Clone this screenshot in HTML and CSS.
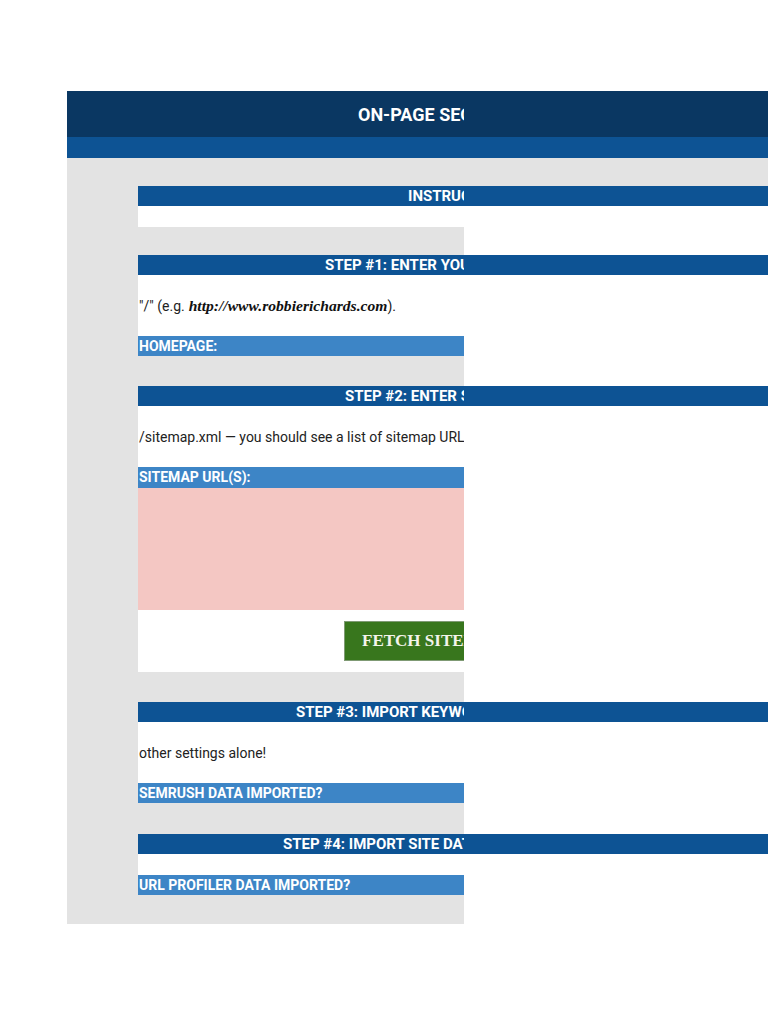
FILE: index.html
```html
<!DOCTYPE html>
<html lang="en">
<head>
<meta charset="utf-8">
<title>On-Page SEO Audit Tool</title>
<link rel="stylesheet" href="styles.css">
</head>
<body>
<main class="sheet">
  <div class="row title">
    <div class="frozen"><span class="title-text">ON-PAGE SEO AUDIT TOOL</span></div>
    <div class="ext"></div>
  </div>
  <div class="strip"></div>

  <div class="row h28"><div class="mg"></div><div class="cell"></div><div class="ext grey"></div></div>
  <div class="row bar"><div class="mg"></div><div class="cell hd p-instr">INSTRUCTIONS</div><div class="ext hd"></div></div>
  <div class="row h21"><div class="mg"></div><div class="cell white"></div><div class="ext"></div></div>
  <div class="row h28"><div class="mg"></div><div class="cell"></div><div class="ext"></div></div>

  <div class="row bar"><div class="mg"></div><div class="cell hd p-s1">STEP #1: ENTER YOUR HOMEPAGE URL</div><div class="ext hd"></div></div>
  <div class="row h61"><div class="mg"></div><div class="cell white txt">"/" (e.g. <b class="url">http://www.robbierichards.com</b>).</div><div class="ext"></div></div>
  <div class="row bar"><div class="mg"></div><div class="cell lbl">HOMEPAGE:</div><div class="ext"></div></div>
  <div class="row h30"><div class="mg"></div><div class="cell"></div><div class="ext"></div></div>

  <div class="row bar"><div class="mg"></div><div class="cell hd p-s2">STEP #2: ENTER SITEMAP URL(S)</div><div class="ext hd"></div></div>
  <div class="row h61"><div class="mg"></div><div class="cell white txt">/sitemap.xml — you should see a list of sitemap URLs in the index</div><div class="ext"></div></div>
  <div class="row h21"><div class="mg"></div><div class="cell lbl">SITEMAP URL(S):</div><div class="ext"></div></div>
  <div class="row h122"><div class="mg"></div><div class="cell pink"></div><div class="ext"></div></div>
  <div class="row h62"><div class="mg"></div><div class="cell white btn-cell"><button class="fetch" type="button">FETCH SITEMAP URLS</button></div><div class="ext"></div></div>
  <div class="row h30"><div class="mg"></div><div class="cell"></div><div class="ext"></div></div>

  <div class="row bar"><div class="mg"></div><div class="cell hd p-s3">STEP #3: IMPORT KEYWORD DATA</div><div class="ext hd"></div></div>
  <div class="row h61"><div class="mg"></div><div class="cell white txt">other settings alone!</div><div class="ext"></div></div>
  <div class="row bar"><div class="mg"></div><div class="cell lbl">SEMRUSH DATA IMPORTED?</div><div class="ext"></div></div>
  <div class="row h31"><div class="mg"></div><div class="cell"></div><div class="ext"></div></div>

  <div class="row bar"><div class="mg"></div><div class="cell hd p-s4">STEP #4: IMPORT SITE DATA</div><div class="ext hd"></div></div>
  <div class="row h21"><div class="mg"></div><div class="cell white"></div><div class="ext"></div></div>
  <div class="row bar"><div class="mg"></div><div class="cell lbl">URL PROFILER DATA IMPORTED?</div><div class="ext"></div></div>
  <div class="row h29"><div class="mg"></div><div class="cell"></div><div class="ext"></div></div>
</main>
</body>
</html>
```

FILE: styles.css
```css
* { box-sizing: border-box; }

html, body {
  margin: 0;
  padding: 0;
  background: #ffffff;
}

body {
  padding: 91px 0 0 67px;
  font-family: Roboto, "Liberation Sans", Arial, sans-serif;
  overflow: hidden;
}

.sheet {
  width: 701px;
  display: flex;
  flex-direction: column;
}

.row {
  display: grid;
  grid-template-columns: 71px 326px 1fr;
}

.mg { background: #e3e3e3; }
.cell {
  background: #e3e3e3;
  overflow: hidden;
  white-space: nowrap;
}
.ext { background: #ffffff; }
.ext.grey { background: #e3e3e3; }
.cell.white { background: #ffffff; }
.cell.pink { background: #f4c7c3; }

/* title */
.row.title {
  grid-template-columns: 397px 1fr;
  height: 46px;
  background: #0a3762;
}
.row.title .ext { background: #0a3762; }
.frozen {
  overflow: hidden;
  white-space: nowrap;
  display: flex;
  align-items: center;
  padding-left: 291px;
}
.title-text {
  color: #ffffff;
  font-weight: 700;
  font-size: 18px;
  flex-shrink: 0;
}

.strip {
  height: 21px;
  background: #0d5394;
}

/* heights */
.h21 { height: 21px; }
.h28 { height: 28px; }
.h29 { height: 29px; }
.h30 { height: 30px; }
.h31 { height: 31px; }
.h61 { height: 61px; }
.h62 { height: 62px; }
.h122 { height: 122px; }
.bar { height: 20px; }

/* section header bars */
.hd {
  background: #0d5394;
  color: #ffffff;
  font-weight: 700;
  font-size: 15px;
  line-height: 20px;
}
.p-instr { padding-left: 270px; }
.p-s1 { padding-left: 187px; }
.p-s2 { padding-left: 207px; }
.p-s3 { padding-left: 158px; }
.p-s4 { padding-left: 145px; }

/* field labels */
.lbl {
  background: #3d85c6;
  color: #ffffff;
  font-weight: 700;
  font-size: 14px;
  line-height: 20px;
  padding-left: 1px;
}
.h21.row .lbl { line-height: 21px; }

/* body text */
.txt {
  font-size: 14px;
  color: #222222;
  display: flex;
  align-items: center;
  padding-left: 1px;
}
.url {
  font-family: "Liberation Serif", "Times New Roman", serif;
  font-style: italic;
  font-weight: 700;
  font-size: 15.6px;
  margin-left: 4px;
  color: #111111;
}

/* button */
.btn-cell {
  display: flex;
  align-items: center;
  padding-left: 206px;
}
.fetch {
  flex-shrink: 0;
  height: 40px;
  padding: 0 18px 0 17px;
  background: #38761d;
  border: 1px solid #7f9a74;
  color: #f4f4ec;
  font-family: "Liberation Serif", "Times New Roman", serif;
  font-weight: 700;
  font-size: 17px;
  letter-spacing: 0;
  white-space: nowrap;
  cursor: pointer;
}
```
